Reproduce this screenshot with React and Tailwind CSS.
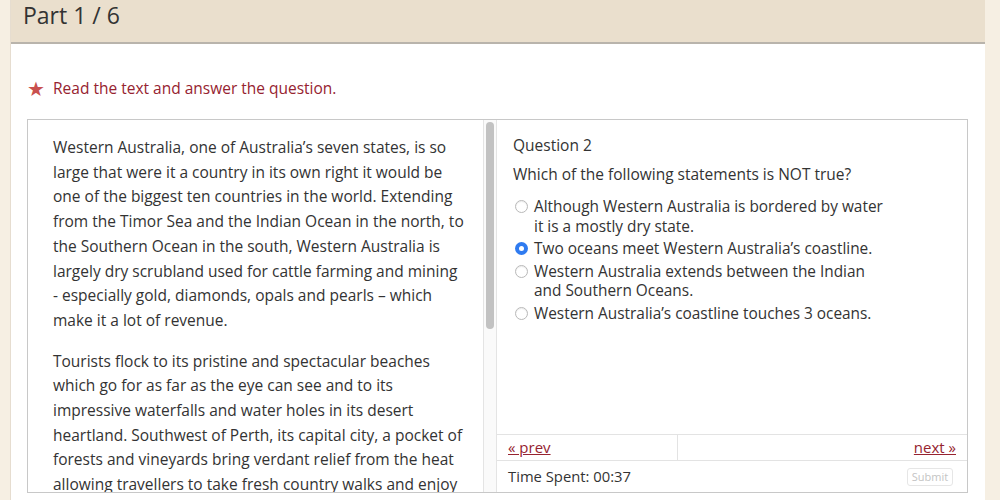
import React from "react";

const font = { fontFamily: '"Open Sans", "Liberation Sans", sans-serif' };

function Radio({ checked }) {
  if (checked) {
    return (
      <span className="mt-[3px] w-[13px] h-[13px] rounded-full bg-[#2f7bf0] flex items-center justify-center shrink-0">
        <span className="w-[5px] h-[5px] rounded-full bg-white" />
      </span>
    );
  }
  return (
    <span className="mt-[3px] w-[13px] h-[13px] rounded-full border border-[#b9b9b9] bg-white shrink-0 shadow-[inset_0_1px_1px_rgba(0,0,0,0.08)]" />
  );
}

export default function App() {
  const options = [
    { t: "Although Western Australia is bordered by water it is a mostly dry state.", c: false },
    { t: "Two oceans meet Western Australia’s coastline.", c: true },
    { t: "Western Australia extends between the Indian and Southern Oceans.", c: false },
    { t: "Western Australia’s coastline touches 3 oceans.", c: false },
  ];
  return (
    <div className="w-[1000px] h-[500px] bg-[#f6efe3] flex overflow-hidden text-[#333]" style={font}>
      <div className="ml-[10px] w-[975px] h-full bg-white border-l border-[#e6ddd0] flex flex-col">
        <div className="h-[44px] shrink-0 bg-[#eadfcd] border-b-2 border-[#b9b4ac] px-[12px] pt-[1px]">
          <div className="text-[23px] leading-[28px] text-[#333]">Part 1 / 6</div>
        </div>
        <div className="flex items-center mt-[34px] pl-[16px] h-[22px]">
          <span className="text-[#c9504e] text-[20px] leading-none w-[26px]">★</span>
          <span className="text-[15.5px] text-[#962330]">Read the text and answer the question.</span>
        </div>
        <div className="mt-[19px] ml-[16px] w-[941px] h-[374px] border border-[#c8c8c8] flex">
          <div className="w-[455px] h-full overflow-hidden pl-[25px] pr-[18px] pt-[15px] text-[15.5px] leading-[24.7px] text-[#333]">
            <p>
              Western Australia, one of Australia’s seven states, is so large that were it a country in its own right it would be one of the biggest ten countries in the world. Extending from the Timor Sea and the Indian Ocean in the north, to the Southern Ocean in the south, Western Australia is largely dry scrubland used for cattle farming and mining - especially gold, diamonds, opals and pearls – which make it a lot of revenue.
            </p>
            <p className="mt-[16px]">
              Tourists flock to its pristine and spectacular beaches which go for as far as the eye can see and to its impressive waterfalls and water holes in its desert heartland. Southwest of Perth, its capital city, a pocket of forests and vineyards bring verdant relief from the heat allowing travellers to take fresh country walks and enjoy the local produce.
            </p>
          </div>
          <div className="w-[14px] h-full border-l border-[#e4e4e4] border-r border-r-[#e4e4e4] bg-[#fafafa] pt-[2px] flex justify-center">
            <div className="w-[8px] h-[207px] rounded-full bg-[#c2c2c2]" />
          </div>
          <div className="flex-1 h-full flex flex-col">
            <div className="flex-1 pl-[16px] pr-[20px] pt-[14px]">
              <div className="text-[15.5px] leading-[22px]">Question 2</div>
              <div className="text-[15.5px] leading-[22px] mt-[7px]">Which of the following statements is NOT true?</div>
              <div className="mt-[12px] flex flex-col gap-[3px]">
                {options.map((o, i) => (
                  <label key={i} className="flex gap-[6px] items-start text-[15.4px] leading-[19.5px] w-[380px] pl-[2px]">
                    <Radio checked={o.c} />
                    <span>{o.t}</span>
                  </label>
                ))}
              </div>
            </div>
            <div className="h-[27px] shrink-0 border-t border-b border-[#e3e3e3] flex text-[15px]">
              <div className="w-[181px] border-r border-[#e3e3e3] pl-[11px] flex items-center">
                <a className="text-[#962330] underline">« prev</a>
              </div>
              <div className="flex-1 pr-[11px] flex items-center justify-end">
                <a className="text-[#962330] underline">next »</a>
              </div>
            </div>
            <div className="h-[31px] shrink-0 flex items-center justify-between pl-[11px] pr-[14px]">
              <span className="text-[14.8px]">Time Spent: 00:37</span>
              <button className="w-[46px] h-[18px] border border-[#e6e6e6] rounded-[3px] text-[11px] text-[#c4c4c4] bg-white leading-none">Submit</button>
            </div>
          </div>
        </div>
      </div>
    </div>
  );
}
